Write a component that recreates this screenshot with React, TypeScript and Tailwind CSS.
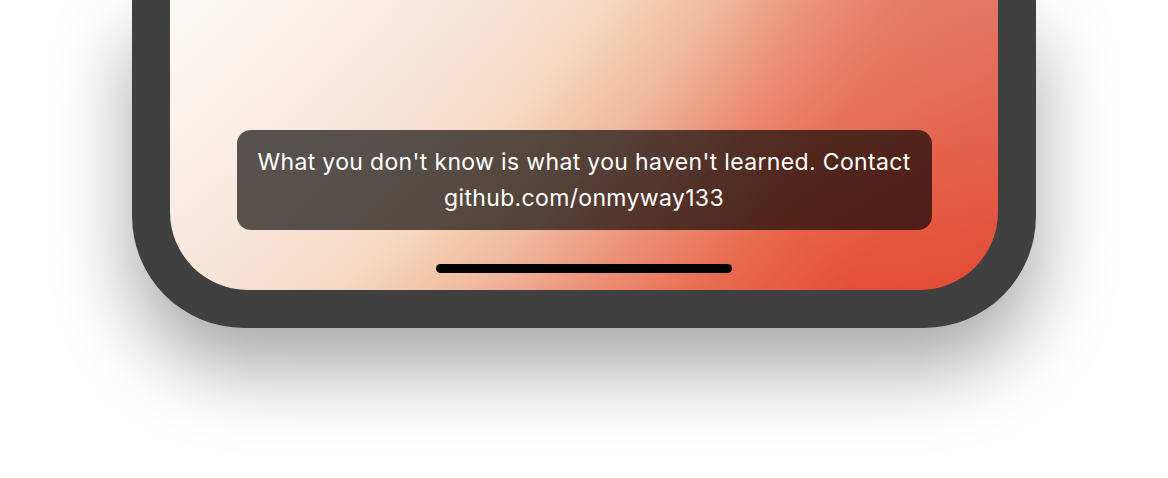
export default function App() {
  return (
    <div className="h-[478px] w-full overflow-hidden bg-white font-['Inter',_'Noto_Sans',_sans-serif]">
      <div className="ml-[132px] w-[904px] rounded-b-[112px] bg-[#404040] px-[38px] pb-[38px] shadow-[0_40px_80px_rgba(0,0,0,0.35)]">
        <div className="flex h-[290px] flex-col items-center rounded-b-[78px] bg-[radial-gradient(ellipse_32%_120%_at_100%_0%,rgba(224,150,134,0.5)_0%,rgba(224,150,134,0.25)_50%,rgba(224,150,134,0)_100%),radial-gradient(circle_at_-1078px_-1133px,#fbf9f6_1570px,#f9ede4_1710px,#f8e4d8_1800px,#f6d9c4_1890px,#f3c9ac_1935px,#f0b89e_1985px,#ec9278_2060px,#e86c50_2150px,#e55038_2255px,#e4432e_2370px)]">
          <div className="mt-[130px] flex h-[100px] w-[695px] items-center justify-center rounded-[14px] bg-black/65 text-center text-[23px] leading-[36px] tracking-[0.015em] text-white">
            <p>
              What you don't know is what you haven't learned. Contact
              <br />
              github.com/onmyway133
            </p>
          </div>
          <div className="mt-[34px] h-[9px] w-[296px] rounded-full bg-black" />
        </div>
      </div>
    </div>
  )
}
